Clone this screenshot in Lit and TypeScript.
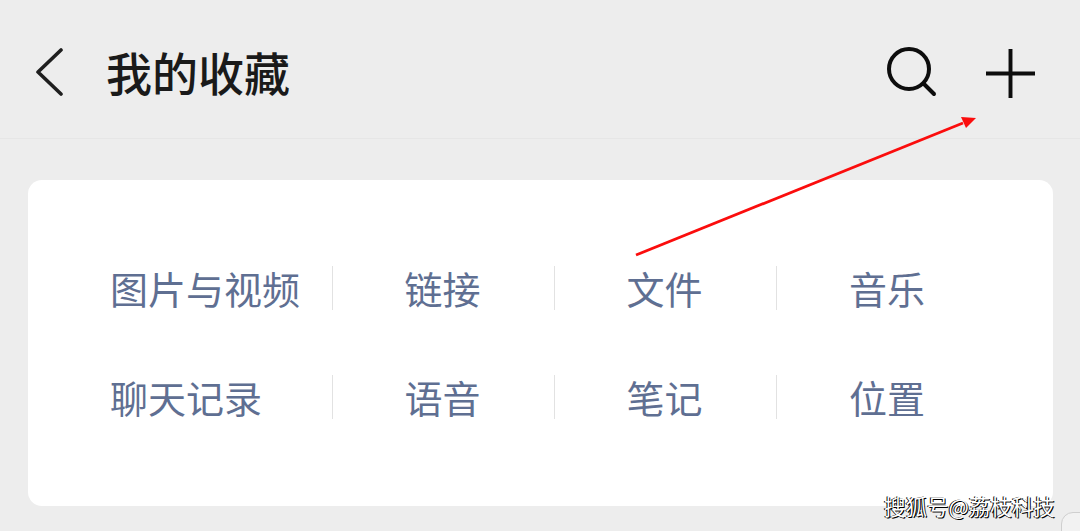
import { LitElement, html, css, svg } from "lit";
import { customElement } from "lit/decorators.js";

const rows = [
  ["图片与视频", "链接", "文件", "音乐"],
  ["聊天记录", "语音", "笔记", "位置"],
];

@customElement("app-root")
export class AppRoot extends LitElement {
  static styles = css`
    :host {
      display: block;
      position: relative;
      width: 1080px;
      height: 531px;
      overflow: hidden;
      background: #ededed;
      font-family: "Noto Sans CJK SC", "Noto Sans", sans-serif;
    }
    .header {
      box-sizing: border-box;
      height: 139px;
      display: flex;
      align-items: center;
      padding: 6px 45px 0 35px;
      border-bottom: 1px solid #e6e6e6;
    }
    .back { width: 28px; height: 48px; margin-right: 43px; }
    .title {
      flex: 1;
      font-size: 46px;
      line-height: 60px;
      font-weight: 500;
      color: #1a1a1a;
      margin-bottom: 2px;
    }
    .search { width: 50px; height: 50px; margin-right: 49px; }
    .plus { width: 49px; height: 49px; margin-top: 2px; }
    .card {
      box-sizing: border-box;
      width: 1025px;
      height: 326px;
      margin: 41px 0 0 28px;
      padding: 53px 0 0 82px;
      background: #fff;
      border-radius: 14px;
    }
    .grid {
      display: grid;
      grid-template-columns: 223px 222px 222px 222px;
      grid-auto-rows: 109.5px;
    }
    .cell {
      display: flex;
      align-items: center;
      font-size: 38px;
      line-height: 50px;
      color: #5f6f92;
    }
    .label { flex: 1; padding-right: 2px; text-align: center; white-space: nowrap; }
    .cell.first .label { text-align: left; padding-right: 0; }
    .divider { width: 1px; height: 44px; background: #e2e2e2; }
    .arrow { position: absolute; left: 0; top: 0; width: 1080px; height: 531px; pointer-events: none; }
    .watermark {
      position: absolute;
      left: 884px;
      top: 491px;
      font-size: 21.5px;
      line-height: 30px;
      color: #fff;
      white-space: nowrap;
      text-shadow: 1px 1px 0 #000, -1px 0 0 #000;
    }
    .corner {
      position: absolute;
      left: 1061px;
      top: 512px;
      width: 40px;
      height: 40px;
      box-sizing: border-box;
      border: 1px solid #cfcfcf;
      border-radius: 12px;
      background: #f2f2f2;
    }
  `;

  render() {
    return html`
      <div class="header">
        <svg class="back" viewBox="0 0 28 48" fill="none" stroke="#1f1f1f" stroke-width="3.6" stroke-linecap="round" stroke-linejoin="round">
          <path d="M26 2 L3 24 L26 46"></path>
        </svg>
        <div class="title">我的收藏</div>
        <svg class="search" viewBox="0 0 50 50" fill="none" stroke="#0d0d0d" stroke-width="4" stroke-linecap="round">
          <circle cx="22" cy="22" r="20"></circle>
          <path d="M37 37 L47 47"></path>
        </svg>
        <svg class="plus" viewBox="0 0 50 50" fill="none" stroke="#0d0d0d" stroke-width="4">
          <path d="M25 0 V50 M0 25 H50"></path>
        </svg>
      </div>
      <div class="card">
        <div class="grid">
          ${rows.map((row) =>
            row.map(
              (label, i) => html`
                <div class="cell ${i === 0 ? "first" : ""}">
                  <span class="label">${label}</span>
                  ${i < 3 ? html`<span class="divider"></span>` : ""}
                </div>
              `
            )
          )}
        </div>
      </div>
      <svg class="arrow" viewBox="0 0 1080 531">
        ${svg`<path d="M636 255 L963 123" stroke="#fb0d0d" stroke-width="2.8" fill="none"></path>
        <path d="M976 118 L961 117 L966 128 Z" fill="#fb0d0d"></path>`}
      </svg>
      <div class="corner"></div>
      <div class="watermark">搜狐号@荔枝科技</div>
    `;
  }
}
